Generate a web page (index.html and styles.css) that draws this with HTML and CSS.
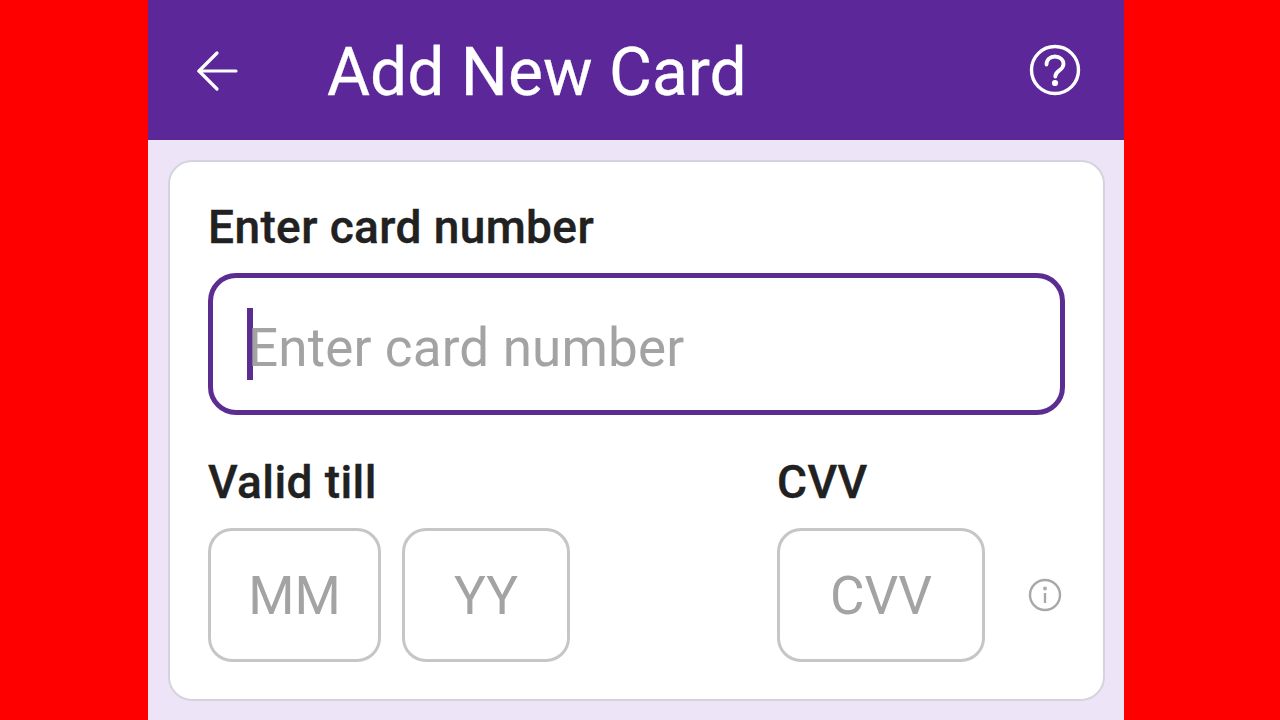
FILE: index.html
```html
<!DOCTYPE html>
<html lang="en">
<head>
  <meta charset="UTF-8" />
  <meta name="viewport" content="width=device-width, initial-scale=1.0"/>
  <title>Add New Card</title>
  <link rel="stylesheet" href="styles.css">
</head>
<body>
  <div class="phone">
    <header class="topbar">
      <svg class="back-icon" width="44" height="44" viewBox="0 0 44 44" fill="none" stroke="#fff" stroke-width="3.2" stroke-linecap="round" stroke-linejoin="round">
        <path d="M40 23H3"/>
        <path d="M21 5L3 23L21 41"/>
      </svg>
      <h1>Add New Card</h1>
      <svg class="help-icon" width="52" height="52" viewBox="0 0 52 52" fill="none" stroke="#fff" stroke-width="3.4" stroke-linecap="round">
        <circle cx="26" cy="26" r="23.5"/>
        <path d="M17.5 20.500c0-4.800 3.700-8 8.500-8s8.500 3.100 8.500 7.400c0 3.300-1.900 4.900-4.400 6.700c-2.500 1.800-3.800 3-3.800 5.900" stroke-width="3.800"/>
        <circle cx="26" cy="39" r="1.400" fill="#fff"/>
      </svg>
    </header>

    <main class="content">
      <div class="card">
        <div class="label">Enter card number</div>
        <div class="number-field">
          <span class="caret"></span>
          <span class="placeholder">Enter card number</span>
        </div>

        <div class="row">
          <div class="valid-group">
            <div class="label">Valid till</div>
            <div class="boxes">
              <div class="box box-mm">MM</div>
              <div class="box box-yy">YY</div>
            </div>
          </div>
          <div class="cvv-group">
            <div class="label">CVV</div>
            <div class="boxes">
              <div class="box box-cvv">CVV</div>
              <svg class="info-icon" width="34" height="34" viewBox="0 0 34 34" fill="none" stroke="#a8a8a8" stroke-width="2.4">
                <circle cx="17" cy="17" r="15"/>
                <path d="M17 15v10"/>
                <circle cx="17" cy="10.500" r="0.700" fill="#a8a8a8"/>
              </svg>
            </div>
          </div>
        </div>
      </div>
    </main>
  </div>
</body>
</html>
```

FILE: styles.css
```css
html, body {
  height: 100%;
}

body {
  margin: 0;
  padding-left: 148px;
  background: #ff0000;
  font-family: Roboto, sans-serif;
  overflow: hidden;
}

.phone {
  width: 976px;
  height: 720px;
  background: #ede4f7;
}

.topbar {
  height: 140px;
  box-sizing: border-box;
  padding: 0 43px 0 48px;
  display: flex;
  align-items: center;
  background: #5c2799;
  color: #fff;
}

.topbar h1 {
  margin: 5px 0 0 87px;
  font-size: 66px;
  font-weight: 400;
  flex: 1;
  -webkit-text-stroke: 0.3px #fff;
}

.content {
  padding: 20px 19px 0 20px;
}

.card {
  height: 541px;
  box-sizing: border-box;
  padding: 40px 38px 0 38px;
  background: #fff;
  border: 2px solid #d5d3dc;
  border-radius: 24px;
}

.label {
  font-size: 46px;
  font-weight: 500;
  line-height: 50px;
  letter-spacing: 0.4px;
  color: #212121;
  -webkit-text-stroke: 0.4px #212121;
}

.number-field {
  height: 142px;
  box-sizing: border-box;
  margin-top: 21px;
  padding-left: 34px;
  display: flex;
  align-items: center;
  border: 5px solid #5c2d91;
  border-radius: 28px;
}

.caret {
  width: 6px;
  height: 72px;
  background: #5c2d91;
}

.placeholder {
  margin: 8px 0 0 -5px;
  font-size: 53px;
  letter-spacing: 0.15px;
  color: #a3a3a3;
}

.row {
  display: flex;
  margin-top: 42px;
}

.valid-group {
  width: 569px;
}

.boxes {
  display: flex;
  align-items: center;
  gap: 21px;
  margin-top: 21px;
}

.box {
  height: 134px;
  box-sizing: border-box;
  padding-top: 2px;
  display: flex;
  align-items: center;
  justify-content: center;
  border: 3px solid #c6c6c6;
  border-radius: 24px;
  font-size: 53px;
  color: #a3a3a3;
}

.box-mm {
  width: 173px;
}

.box-yy {
  width: 168px;
}

.box-cvv {
  width: 208px;
  margin-right: 22px;
}
```
